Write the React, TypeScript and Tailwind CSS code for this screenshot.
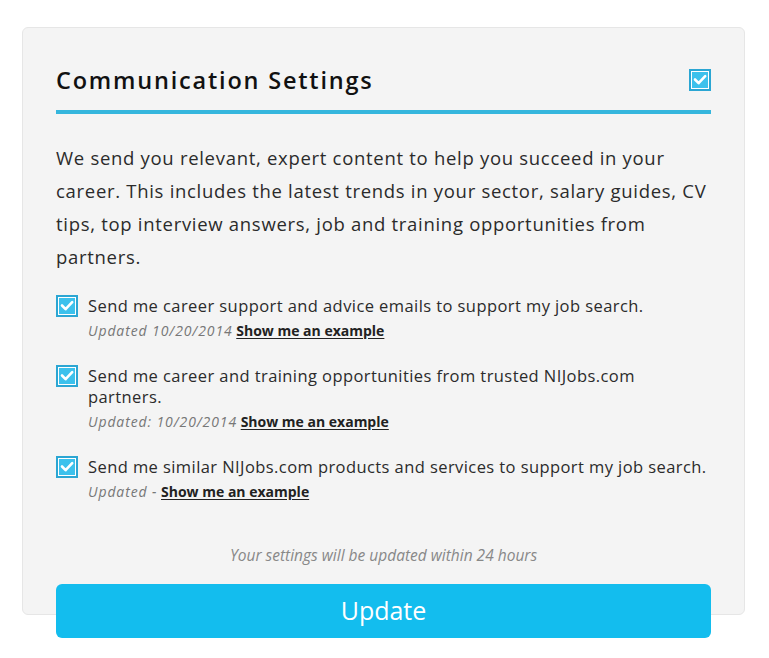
import React from "react";

function Tick({ size = 22 }: { size?: number }) {
  return (
    <svg width={size} height={size} viewBox="0 0 22 22" className="shrink-0">
      <rect x="1" y="1" width="20" height="20" fill="#ffffff" stroke="#2ba6d3" strokeWidth="2" />
      <rect x="3" y="3" width="16" height="16" fill="#3cc1ec" />
      <path d="M6 10.5 L9.6 14.2 L16.2 7.2" fill="none" stroke="#ffffff" strokeWidth="2.6" strokeLinecap="round" strokeLinejoin="round" />
    </svg>
  );
}

type Pref = { label: React.ReactNode; updated: string };

const prefs: Pref[] = [
  {
    label: "Send me career support and advice emails to support my job search.",
    updated: "Updated 10/20/2014",
  },
  {
    label: (
      <>
        Send me career and training opportunities from trusted NIJobs.com
        <br />
        partners.
      </>
    ),
    updated: "Updated: 10/20/2014",
  },
  {
    label: "Send me similar NIJobs.com products and services to support my job search.",
    updated: "Updated -",
  },
];

export default function App() {
  return (
    <div className="min-h-[658px] bg-white pt-[27px] pl-[22px]" style={{ fontFamily: "'Open Sans', Lato, sans-serif" }}>
      <div className="w-[723px] rounded-[6px] border border-[#e6e6e6] bg-[#f4f4f4] px-[33px] pt-[37px]">
        <div className="flex items-center justify-between">
          <h1 className="text-[23.5px] font-semibold leading-[30px] tracking-[1.8px] text-[#111]">
            Communication Settings
          </h1>
          <Tick />
        </div>
        <div className="mt-[15px] h-[4px] bg-[#35b6dd]" />

        <p className="mt-[27px] text-[18.5px] leading-[33px] tracking-[0.7px] text-[#2b2b2b]">
          We send you relevant, expert content to help you succeed in your
          <br />
          career. This includes the latest trends in your sector, salary guides, CV
          <br />
          tips, top interview answers, job and training opportunities from
          <br />
          partners.
        </p>

        <div className="mt-[22px] flex flex-col gap-[24px]">
          {prefs.map((p, i) => (
            <div key={i} className="flex gap-[10px]">
              <Tick />
              <div>
                <div className="text-[16.5px] leading-[21px] tracking-[0.42px] text-[#2b2b2b]">{p.label}</div>
                <div className="mt-[4px] text-[14px] leading-[21px] text-[#777]">
                  <span className="italic tracking-[0.9px]">{p.updated}</span>{" "}
                  <a href="#" className="font-bold text-[#222] underline underline-offset-2">
                    Show me an example
                  </a>
                </div>
              </div>
            </div>
          ))}
        </div>

        <p className="mt-[43px] text-center text-[15.5px] italic leading-[20px] text-[#888]">
          Your settings will be updated within 24 hours
        </p>

        <button className="mt-[19px] -mb-[24px] flex h-[54px] w-full items-center justify-center rounded-[6px] bg-[#13bdee] text-[25px] text-white">
          Update
        </button>
      </div>
    </div>
  );
}
